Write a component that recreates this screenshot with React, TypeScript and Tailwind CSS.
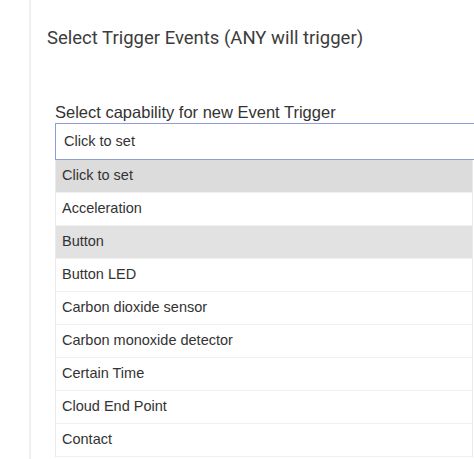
const options = [
  "Click to set",
  "Acceleration",
  "Button",
  "Button LED",
  "Carbon dioxide sensor",
  "Carbon monoxide detector",
  "Certain Time",
  "Cloud End Point",
  "Contact",
];

export default function App() {
  return (
    <div className="flex h-[459px] w-[474px] overflow-hidden bg-white font-['Liberation_Sans',Arial,sans-serif] text-[#333]">
      <div className="w-[29px] shrink-0" />
      <div className="flex min-w-0 flex-1 flex-col border-l-2 border-[#efefef]">
        <h2 className="pl-[16px] pt-[26px] font-['Roboto',sans-serif] text-[18.5px] leading-[24px] text-[#3c3c3c]">
          Select Trigger Events (ANY will trigger)
        </h2>

        <div className="mt-[52px] flex flex-col pl-[24px]">
          <label className="text-[16.5px] leading-[20px] text-[#333]">
            Select capability for new Event Trigger
          </label>

          <div className="mt-[1px] flex h-[37px] w-[460px] items-center border border-[#8f9ddb] px-[8px] text-[14.5px]">
            Click to set
          </div>

          <ul className="w-[418px] border-x border-[#eaeaea] text-[14.5px]">
            {options.map((opt, i) => (
              <li
                key={opt}
                className={`flex h-[33px] items-center border-b border-[#f0f0f0] px-[6px] ${
                  i === 0 ? "bg-[#dcdcdc]" : i === 2 ? "bg-[#e2e2e2]" : "bg-white"
                }`}
              >
                {opt}
              </li>
            ))}
          </ul>
        </div>
      </div>
    </div>
  );
}
